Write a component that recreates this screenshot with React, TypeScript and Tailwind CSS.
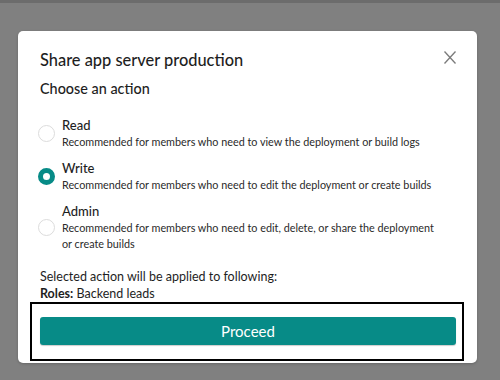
import React from "react";

const options = [
  { label: "Read", desc: "Recommended for members who need to view the deployment or build logs", checked: false },
  { label: "Write", desc: "Recommended for members who need to edit the deployment or create builds", checked: true },
  { label: "Admin", desc: "Recommended for members who need to edit, delete, or share the deployment or create builds", checked: false },
];

function Radio({ checked }: { checked: boolean }) {
  return checked ? (
    <span className="w-[17px] h-[17px] rounded-full border-[5px] border-[#078b87] bg-white shrink-0" />
  ) : (
    <span className="w-[17px] h-[17px] rounded-full border border-[#dcdcdc] bg-white shrink-0" />
  );
}

export default function App() {
  return (
    <div
      className="w-[500px] h-[380px] bg-[#808080] overflow-hidden text-[#1e1e1e]"
      style={{ fontFamily: "Lato, 'Open Sans', sans-serif" }}
    >
      <div className="h-[3px] bg-[#6c6c6c]" />
      <div className="pt-[28px] pl-[18px]">
        <div className="relative w-[459px] h-[332px] bg-white rounded-[5px] shadow-[0_1px_3px_rgba(0,0,0,0.2)] pl-[22px] pt-[17px] pr-[12px]">
          <svg
            className="absolute top-[20px] right-[21px]"
            width="12"
            height="13"
            viewBox="0 0 12 13"
            fill="none"
            stroke="#7a7a7a"
            strokeWidth="1.3"
          >
            <line x1="0.5" y1="0.5" x2="11.5" y2="12.5" />
            <line x1="11.5" y1="0.5" x2="0.5" y2="12.5" />
          </svg>
          <h1 className="text-[16.4px] leading-[24px] font-medium">Share app server production</h1>
          <h2 className="mt-[7px] text-[14.4px] leading-[20px] font-medium">Choose an action</h2>
          <div className="mt-[17px] flex flex-col gap-[9px]">
            {options.map((o) => (
              <div key={o.label} className="flex items-center gap-[7px] -ml-[2px]">
                <Radio checked={o.checked} />
                <div className="flex flex-col">
                  <span className="text-[13px] leading-[18px] font-medium">{o.label}</span>
                  <span className="text-[10.8px] leading-[16px] text-[#2a2a2a] max-w-[376px]">{o.desc}</span>
                </div>
              </div>
            ))}
          </div>
          <p className="mt-[16px] text-[12.5px] leading-[17px]">Selected action will be applied to following:</p>
          <p className="text-[12.5px] leading-[17px]">
            <span className="font-bold">Roles:</span> Backend leads
          </p>
          <div className="-ml-[10px] w-[434px] h-[59px] border-2 border-black pt-[13px] pl-[8px]">
            <button className="w-[416px] h-[28px] rounded-[3px] bg-[#078b87] text-white text-[15px] shadow-[0_1px_1px_rgba(0,0,0,0.2)]">
              Proceed
            </button>
          </div>
        </div>
      </div>
    </div>
  );
}
